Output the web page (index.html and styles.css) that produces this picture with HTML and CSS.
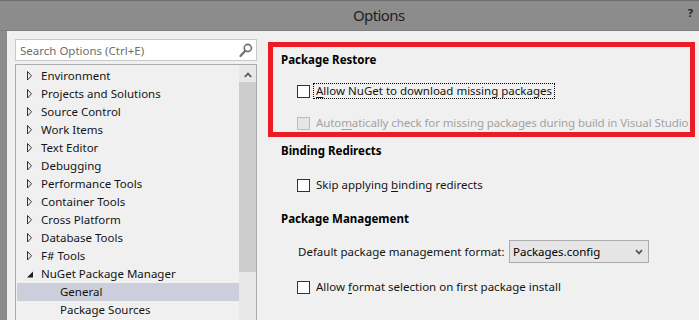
FILE: index.html
```html
<!DOCTYPE html>
<html>
<head>
<meta charset="utf-8">
<title>Options</title>
<link rel="stylesheet" href="styles.css">
</head>
<body>
<div class="titlebar"><span class="title">Options</span><span class="help">?</span></div>
<div class="main">
  <div class="left">
    <div class="search">
      <span class="ph">Search Options (Ctrl+E)</span>
      <svg class="mag" width="14" height="15" viewBox="0 0 14 15"><circle cx="8.8" cy="5" r="3.6" fill="none" stroke="#6f6f6f" stroke-width="1.6"/><line x1="6.3" y1="7.7" x2="1.5" y2="13" stroke="#6f6f6f" stroke-width="2.2" stroke-linecap="round"/></svg>
    </div>
    <div class="tree">
      <div class="list">
        <div class="node"><span class="tw"><svg width="6" height="10" viewBox="0 0 6 10"><polygon points="0.5,0.5 4.5,4.8 0.5,9" fill="none" stroke="#333" stroke-width="1"/></svg></span>Environment</div>
        <div class="node"><span class="tw"><svg width="6" height="10" viewBox="0 0 6 10"><polygon points="0.5,0.5 4.5,4.8 0.5,9" fill="none" stroke="#333" stroke-width="1"/></svg></span>Projects and Solutions</div>
        <div class="node"><span class="tw"><svg width="6" height="10" viewBox="0 0 6 10"><polygon points="0.5,0.5 4.5,4.8 0.5,9" fill="none" stroke="#333" stroke-width="1"/></svg></span>Source Control</div>
        <div class="node"><span class="tw"><svg width="6" height="10" viewBox="0 0 6 10"><polygon points="0.5,0.5 4.5,4.8 0.5,9" fill="none" stroke="#333" stroke-width="1"/></svg></span>Work Items</div>
        <div class="node"><span class="tw"><svg width="6" height="10" viewBox="0 0 6 10"><polygon points="0.5,0.5 4.5,4.8 0.5,9" fill="none" stroke="#333" stroke-width="1"/></svg></span>Text Editor</div>
        <div class="node"><span class="tw"><svg width="6" height="10" viewBox="0 0 6 10"><polygon points="0.5,0.5 4.5,4.8 0.5,9" fill="none" stroke="#333" stroke-width="1"/></svg></span>Debugging</div>
        <div class="node"><span class="tw"><svg width="6" height="10" viewBox="0 0 6 10"><polygon points="0.5,0.5 4.5,4.8 0.5,9" fill="none" stroke="#333" stroke-width="1"/></svg></span>Performance Tools</div>
        <div class="node"><span class="tw"><svg width="6" height="10" viewBox="0 0 6 10"><polygon points="0.5,0.5 4.5,4.8 0.5,9" fill="none" stroke="#333" stroke-width="1"/></svg></span>Container Tools</div>
        <div class="node"><span class="tw"><svg width="6" height="10" viewBox="0 0 6 10"><polygon points="0.5,0.5 4.5,4.8 0.5,9" fill="none" stroke="#333" stroke-width="1"/></svg></span>Cross Platform</div>
        <div class="node"><span class="tw"><svg width="6" height="10" viewBox="0 0 6 10"><polygon points="0.5,0.5 4.5,4.8 0.5,9" fill="none" stroke="#333" stroke-width="1"/></svg></span>Database Tools</div>
        <div class="node"><span class="tw"><svg width="6" height="10" viewBox="0 0 6 10"><polygon points="0.5,0.5 4.5,4.8 0.5,9" fill="none" stroke="#333" stroke-width="1"/></svg></span>F# Tools</div>
        <div class="node"><span class="tw"><svg width="6" height="7" viewBox="0 0 6 7"><polygon points="6,0.5 6,6.5 0,6.5" fill="#1e1e1e"/></svg></span>NuGet Package Manager</div>
        <div class="node child sel">General</div>
        <div class="node child">Package Sources</div>
      </div>
      <div class="vscroll">
        <div class="up"><svg width="8" height="6" viewBox="0 0 8 6"><polyline points="0.8,5 4,1.6 7.2,5" fill="none" stroke="#5a5a5a" stroke-width="1.8"/></svg></div>
        <div class="thumb"></div>
      </div>
    </div>
  </div>
  <div class="right">
    <div class="highlight">
      <div class="h">Package Restore</div>
      <div class="row gap14"><span class="cb"></span><span class="lbl focus"><u>A</u>llow NuGet to download missing packages</span></div>
      <div class="row gap14 disabled"><span class="cb"></span><span class="lbl">Auto<u>m</u>atically check for missing packages during build in Visual Studio</span></div>
    </div>
    <div class="section">
      <div class="h first">Binding Redirects</div>
      <div class="row gap17"><span class="cb"></span><span class="lbl">Skip applying <u>b</u>inding redirects</span></div>
      <div class="h gap17">Package Management</div>
      <div class="ddrow">
        <span class="ddlabel">Default package management format:</span>
        <div class="dropdown"><span>Packages.config</span><svg width="8" height="6" viewBox="0 0 8 6"><polyline points="1,1.2 4,4.4 7,1.2" fill="none" stroke="#5a5a5a" stroke-width="1.8"/></svg></div>
      </div>
      <div class="row gap15"><span class="cb"></span><span class="lbl">Allow <u>f</u>ormat selection on first package install</span></div>
    </div>
  </div>
</div>
</body>
</html>
```
FILE: styles.css
```css
html, body {
  margin: 0;
  padding: 0;
}
body {
  width: 699px;
  height: 320px;
  overflow: hidden;
  background: #f0f0f0;
  font-family: "Noto Sans", "DejaVu Sans", sans-serif;
  font-size: 11.5px;
  color: #141414;
}
.titlebar {
  height: 29px;
  border-top: 1px solid #6e6e6e;
  border-bottom: 1px solid #7e7e7e;
  background: #8c8c8c;
  display: flex;
  align-items: center;
  line-height: 29px;
}
.title {
  margin-left: 353px;
  font-size: 15px;
  letter-spacing: -0.6px;
  color: #1f1f1f;
}
.help {
  margin-left: auto;
  margin-right: 6px;
  font-weight: bold;
  font-size: 11px;
  color: #222;
  position: relative;
  top: -3px;
}
.main {
  display: flex;
  height: 289px;
  border-left: 7px solid #8c8c8c;
}
.left {
  width: 250px;
  flex: none;
  padding: 8px 0 0 8px;
  box-sizing: border-box;
}
.search {
  width: 242px;
  height: 22px;
  box-sizing: border-box;
  border: 1px solid #c8c8c8;
  background: #fff;
  display: flex;
  align-items: center;
  padding-left: 4px;
  padding-right: 3px;
}
.ph {
  color: #6d6d6d;
  white-space: nowrap;
}
.mag {
  margin-left: auto;
  margin-top: 1px;
}
.tree {
  margin-top: 3px;
  width: 242px;
  height: 270px;
  box-sizing: border-box;
  border: 1px solid #acacac;
  display: flex;
}
.list {
  flex: 1;
  padding-top: 2px;
}
.node {
  height: 18px;
  line-height: 18px;
  display: flex;
  align-items: center;
  white-space: nowrap;
  margin-left: 1px;
}
.tw {
  width: 24px;
  flex: none;
  box-sizing: border-box;
  padding-left: 10px;
  display: flex;
  align-items: center;
}
.child {
  padding-left: 43px;
}
.sel {
  background: #cccedb;
}
.vscroll {
  width: 17px;
  flex: none;
  background: #e8e8e8;
}
.up {
  height: 17px;
  display: flex;
  justify-content: center;
  align-items: center;
  padding-top: 2px;
  box-sizing: border-box;
}
.thumb {
  height: 190px;
  background: #cdcdcd;
}
.right {
  flex: 1;
  padding: 11px 0 0 11px;
}
.highlight {
  width: 427px;
  height: 95px;
  box-sizing: border-box;
  border: 5px solid #ed1c24;
  padding: 5px 0 0 8px;
}
.h {
  font-weight: bold;
  line-height: 16px;
  color: #000;
}
.row {
  display: flex;
  align-items: center;
  height: 18px;
  padding-left: 16px;
  white-space: nowrap;
}
.gap14 { margin-top: 14px; }
.gap15 { margin-top: 15px; }
.gap17 { margin-top: 17px; }
.cb {
  width: 13px;
  height: 13px;
  flex: none;
  box-sizing: border-box;
  border: 1px solid #333;
  background: #fff;
  margin-right: 3px;
}
.lbl {
  padding: 0 2px;
  border: 1px dotted transparent;
  line-height: 14px;
}
.focus {
  border-color: #000;
}
u {
  text-underline-offset: 2px;
}
.disabled .cb {
  border-color: #bcbcbc;
  background: #e6e6e6;
}
.disabled .lbl {
  color: #a2a2a2;
  letter-spacing: -0.1px;
}
.section {
  padding-left: 13px;
}
.first {
  margin-top: 6px;
}
.ddrow {
  margin-top: 13px;
  height: 23px;
  display: flex;
  align-items: center;
  padding-left: 17px;
}
.ddlabel {
  width: 211px;
  flex: none;
  line-height: 18px;
  white-space: nowrap;
}
.dropdown {
  width: 140px;
  height: 23px;
  box-sizing: border-box;
  border: 1px solid #acacac;
  background: #e5e5e5;
  display: flex;
  align-items: center;
  padding: 0 5px 0 3px;
  color: #000;
}
.dropdown svg {
  margin-left: auto;
}
```
